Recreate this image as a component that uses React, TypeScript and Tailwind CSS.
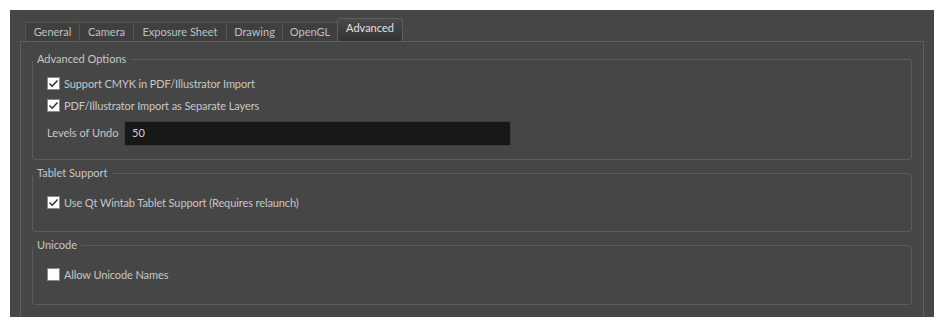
import React from "react";

const font = { fontFamily: 'Lato, "Noto Sans", sans-serif' };

function Check({ checked }: { checked: boolean }) {
  return (
    <div className="w-[13px] h-[13px] bg-white border border-[#8a8a8a] flex items-center justify-center shrink-0">
      {checked && (
        <svg width="11" height="11" viewBox="0 0 11 11">
          <path d="M1.5 5.5 L4.2 8.2 L9.5 2.5" fill="none" stroke="#2a2a2a" strokeWidth="1.4" />
        </svg>
      )}
    </div>
  );
}

function Row({ checked, label }: { checked: boolean; label: string }) {
  return (
    <div className="h-[22px] flex items-center pl-[14px] gap-[4px]">
      <Check checked={checked} />
      <span className="text-[11px] text-[#c6c6c6] leading-none tracking-[-0.1px]">{label}</span>
    </div>
  );
}

function Group({ title, className, children }: { title: string; className: string; children: React.ReactNode }) {
  return (
    <div className={"relative border border-[#5c5c5c] rounded-[3px] " + className}>
      <span className="absolute left-[0px] -top-[8px] px-[4px] bg-[#464646] text-[11px] leading-[14px] text-[#c6c6c6]">
        {title}
      </span>
      {children}
    </div>
  );
}

const tabs = [
  { t: "General", w: "w-[55px]" },
  { t: "Camera", w: "w-[55px]" },
  { t: "Exposure Sheet", w: "w-[94px]" },
  { t: "Drawing", w: "w-[57px]" },
  { t: "OpenGL", w: "w-[56px]" },
];

export default function App() {
  return (
    <div className="w-[944px] h-[328px] bg-white pt-[10px] pl-[10px]" style={font}>
      <div className="w-[924px] h-[307px] bg-[#464646] overflow-hidden pl-[10px] pt-[9px]">
        <div className="flex items-end ml-[5px] h-[22px]">
          {tabs.map((x) => (
            <div
              key={x.t}
              className={
                "h-[19px] flex items-center justify-center bg-[#3f3f3f] border border-b-0 border-[#555555] -mr-px text-[11px] text-[#bfbfc4] " +
                x.w
              }
            >
              {x.t}
            </div>
          ))}
          <div className="h-[23px] w-[66px] flex items-center justify-center bg-gradient-to-b from-[#4a4a4a] to-[#333333] border border-b-0 border-[#5e5e5e] rounded-t-[3px] text-[11px] text-[#e2e2e2] pb-[3px]">
            Advanced
          </div>
        </div>
        <div className="w-[904px] h-[300px] border border-[#5e5e5e] px-[11px] pt-[17px]">
          <Group title="Advanced Options" className="pt-[12px] pb-[13px]">
            <Row checked label="Support CMYK in PDF/Illustrator Import" />
            <Row checked label="PDF/Illustrator Import as Separate Layers" />
            <div className="flex items-center mt-[5px] pl-[14px]">
              <span className="w-[77px] text-[11px] text-[#c6c6c6]">Levels of Undo</span>
              <div className="w-[387px] h-[25px] bg-[#181818] border border-[#3d3d3d] flex items-center pl-[7px] text-[11px] text-[#d0d0d0]">
                50
              </div>
            </div>
          </Group>
          <Group title="Tablet Support" className="mt-[13px] pt-[17px] pb-[18px]">
            <Row checked label="Use Qt Wintab Tablet Support (Requires relaunch)" />
          </Group>
          <Group title="Unicode" className="mt-[13px] pt-[17px] pb-[19px]">
            <Row checked={false} label="Allow Unicode Names" />
          </Group>
        </div>
      </div>
    </div>
  );
}
